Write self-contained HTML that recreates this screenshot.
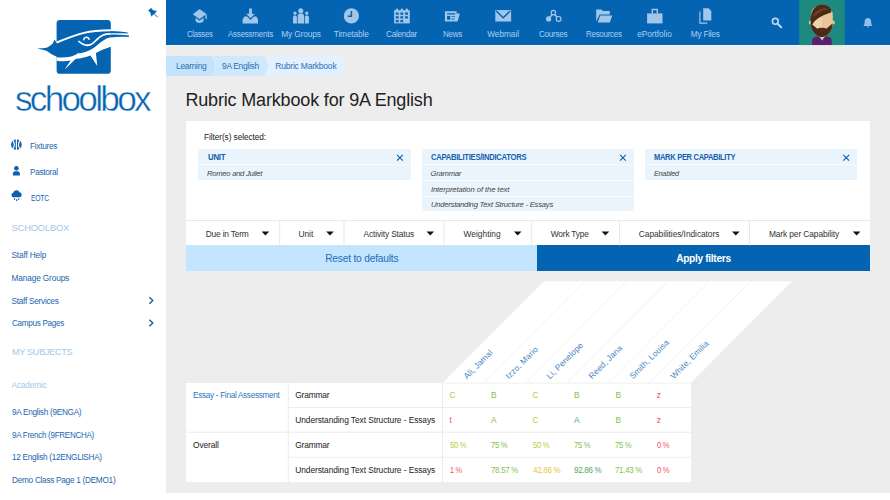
<!DOCTYPE html>
<html><head><meta charset="utf-8"><title>Rubric Markbook for 9A English</title>
<style>
*{box-sizing:border-box;margin:0;padding:0}
html,body{width:890px;height:500px;overflow:hidden;background:#ededed;font-family:"Liberation Sans",sans-serif}
.x{position:absolute;white-space:nowrap;line-height:1}
.a{position:absolute}
.rh{position:absolute;font-size:8.4px;color:#4a86c6;white-space:nowrap;transform-origin:0 100%;transform:rotate(-45deg);line-height:1}
</style></head><body>

<div class="a" style="left:0;top:0;width:166px;height:500px;background:#fff"></div>
<div class="a" style="left:166px;top:0;width:724px;height:45.1px;background:#0564b2"></div>
<div class="a" style="left:166px;top:45.1px;width:724px;height:1.4px;background:#f7f4f1"></div>
<div class="a" style="left:166px;top:493px;width:724px;height:7px;background:#fff"></div>
<!-- panel -->
<div class="a" style="left:186px;top:120.5px;width:684.3px;height:150.5px;background:#fff"></div>
<div class="a" style="left:198.4px;top:149.1px;width:212.4px;height:30.9px;background:#eaf4fd"></div>
<div class="a" style="left:421.8px;top:149.1px;width:212.5px;height:62.2px;background:#eaf4fd"></div>
<div class="a" style="left:644.9px;top:149.1px;width:212.4px;height:30.9px;background:#eaf4fd"></div>
<div class="a" style="left:198.4px;top:164.2px;width:212.4px;height:1px;background:#f8fbff"></div>
<div class="a" style="left:421.8px;top:164.2px;width:212.5px;height:1px;background:#f8fbff"></div>
<div class="a" style="left:421.8px;top:180px;width:212.5px;height:1px;background:#f8fbff"></div>
<div class="a" style="left:421.8px;top:195.7px;width:212.5px;height:1px;background:#f8fbff"></div>
<div class="a" style="left:644.9px;top:164.2px;width:212.4px;height:1px;background:#f8fbff"></div>
<div class="a" style="left:186px;top:220px;width:684.3px;height:1px;background:#e9e9e9"></div>
<div class="a" style="left:186px;top:245.3px;width:351px;height:25.7px;background:#c3e5fd"></div>
<div class="a" style="left:537px;top:245.3px;width:333.3px;height:25.7px;background:#0564b2"></div>
<!-- table -->
<div class="a" style="left:186.4px;top:382.9px;width:504.3px;height:99.3px;background:#fff"></div>

<svg class="a" style="left:0;top:0" width="890" height="500" viewBox="0 0 890 500">
<!-- logo -->
<rect x="56.6" y="20.1" width="54.2" height="53.7" rx="3.4" fill="#0564b2"/>
<path d="M56.6 57.2 C63 57.8 70 57.4 75 55 L78.4 53.6 C84 53 90 50.6 94 47.8 C98 44.8 101 41.5 105 39.4 C107 38.2 109 37.6 111.4 37.1 L111.4 46.6 C106 48.2 100 51 95.9 53.1 L97.3 66 L90.4 55.4 C86 57 80 58.4 75.4 59 L64.7 69.4 L70.6 60.6 C66 61.6 61 61.4 56.6 60.7 Z" fill="#fff"/>
<path d="M64.7 69.4 L77.9 53 L79.6 54 Z" fill="#fff"/>
<path d="M37.3 48.3 C41 48.4 44 48.2 46.4 47.8 C49 46.6 51 45 52.7 43.4 L54.6 39.6 L56.3 42.4 L57.4 42.2 L57.4 57 C55 56 53 55 51.2 54 C49.4 52.6 48 51.6 46.4 50.7 C43 49.8 40 49 37.3 48.3 Z" fill="#0564b2"/>
<path d="M110.2 31.1 C117 31.2 123 31.8 127.9 32.5 L127.5 33.6 C122 33.3 116 33.2 110.2 33.3 Z" fill="#0564b2"/>
<path d="M110.4 34.6 C117 34.7 123 35 129 35.4 L128.8 36.9 C122 36.6 116 36.7 110.4 37.4 Z" fill="#0564b2"/>
<path d="M56.6 42.5 C65 39 75 35 84 32.8 C92 31 102 30.4 110.8 30.2" fill="none" stroke="#fff" stroke-width="1.9"/>
<path d="M110.8 33.9 C107 34 105 34.3 103.6 34.8 C101 36 98.5 38 96.4 40 C94.5 42 92.5 44 90 44.8 C88.5 45.3 87.3 45.3 86 45.2" fill="none" stroke="#fff" stroke-width="1.8"/>
<path d="M86 45.2 C83.4 44.8 80.8 43.2 78.8 41.4" fill="none" stroke="#fff" stroke-width="1.5" stroke-linecap="round"/>
<path d="M83.7 40.4 A2.75 2.75 0 1 1 89.2 39.8" fill="none" stroke="#fff" stroke-width="1.5"/>
<!-- pin -->
<path d="M151.2 8.2 L152.7 10.2 L156.6 11.4 L154.2 13.6 L151.4 16.2 L150.5 12.4 L148.4 10.6 Z" fill="#0564b2" stroke="#0564b2" stroke-width="0.5" stroke-linejoin="round"/>
<path d="M153.6 13.2 L157.6 17.2" stroke="#0564b2" stroke-width="1" fill="none"/>
<!-- sidebar icons -->
<g fill="#0f5fad">
<circle cx="16.4" cy="144.6" r="5.3"/>
<g stroke="#fff" fill="none" stroke-width="1.15"><path d="M16.4 139 V150.2" stroke-width="1.2"/><path d="M12.6 139.8 Q16 144.6 12.6 149.4"/><path d="M20.2 139.8 Q16.8 144.6 20.2 149.4"/></g>
<circle cx="16.4" cy="168.3" r="2.3"/><path d="M12.9 175.6 V173.8 C12.9 171.8 14.4 171.2 16.4 171.2 C18.4 171.2 19.9 171.8 19.9 173.8 V175.6 Z"/>
<path d="M13.4 197.3 A2.3 2.3 0 0 1 13.2 192.8 A3.4 3.4 0 0 1 19.6 192.2 A2.6 2.6 0 0 1 19.6 197.3 Z"/>
<rect x="14" y="198.3" width="1.1" height="1.6"/><rect x="16.1" y="199.2" width="1.1" height="1.8"/><rect x="18.2" y="198.3" width="1.1" height="1.6"/>
</g>
<g fill="none" stroke="#0b5aa5" stroke-width="1.3"><path d="M149.4 297.2 L152.8 300.5 L149.4 303.8"/><path d="M149.4 319.7 L152.8 323 L149.4 326.3"/></g>
<!-- nav icons -->
<g fill="#a0c6ea">
<path d="M195.6 17 L199.5 20 L203.6 17 V20.6 C203.6 22.1 201.6 23.1 199.5 23.1 C197.4 23.1 195.6 22.1 195.6 20.6 Z"/>
<path d="M199.5 8.2 L207.6 13.9 L199.5 20 L191.8 14.3 Z" stroke="#0564b2" stroke-width="1.3"/>
<rect x="205.4" y="14.6" width="1.4" height="4.4"/>
<path d="M244.4 16.4 H256.4 L258 19.6 V23.4 H242.6 V19.6 Z"/>
<path d="M248.5 8 H252.5 V13.2 H256.2 L250.5 19.2 L244.8 13.2 H248.5 Z" stroke="#0564b2" stroke-width="1.2"/>
<circle cx="300.8" cy="10.8" r="2.5"/><path d="M297.7 23.4 V16 C297.7 14.2 299 13.6 300.8 13.6 C302.6 13.6 304 14.2 304 16 V23.4Z"/>
<circle cx="295" cy="13.2" r="1.6"/><path d="M293 23.4 V17.4 C293 16.2 293.9 15.6 295 15.6 C296.1 15.6 296.9 16.2 296.9 17.4 V23.4Z"/>
<circle cx="306.8" cy="13.2" r="1.6"/><path d="M304.8 23.4 V17.4 C304.8 16.2 305.7 15.6 306.8 15.6 C307.9 15.6 308.9 16.2 308.9 17.4 V23.4Z"/>
<circle cx="351.4" cy="15.9" r="7.6"/>
<path d="M394.1 10.2 H409.8 V23.4 H394.1 Z"/>
<rect x="395.8" y="8.6" width="2.4" height="2.4" rx="1.2"/><rect x="400.7" y="8.6" width="2.4" height="2.4" rx="1.2"/><rect x="405.6" y="8.6" width="2.4" height="2.4" rx="1.2"/>
<path d="M444.9 11.2 H456.6 V13.6 H459.8 L457.6 21.5 H444.9 Z"/>
<rect x="495.3" y="10.1" width="15.8" height="11.4"/>
<path d="M596.2 9.6 H601.6 L602.6 11 H609.8 V14.6 H599.6 L596.2 21.4 Z"/>
<path d="M600.2 15.4 H612.3 L609.8 22.5 H597.8 Z"/>
<rect x="647.1" y="13.4" width="15.4" height="10"/>
<path d="M703.2 8.3 H708.6 L711.3 11 V20.6 H703.2 Z"/>
</g>
<g stroke="#0564b2" fill="none">
<path d="M351.4 11 V16.2 H347.8" stroke-width="1.5"/>
<path d="M395.8 12.4 h2.8 v2.3 h-2.8z M400.4 12.4 h2.8 v2.3 h-2.8z M405.1 12.4 h2.8 v2.3 h-2.8z M395.8 16.2 h2.8 v2.3 h-2.8z M400.4 16.2 h2.8 v2.3 h-2.8z M405.1 16.2 h2.8 v2.3 h-2.8z M395.8 20 h2.8 v2.3 h-2.8z M400.4 20 h2.8 v2.3 h-2.8z" fill="#0564b2" stroke="none"/>
<path d="M447.1 13.2 H455.2 V14.4 H447.1Z M447.1 16.1 H450.3 V19.7 H447.1Z M451.6 16.2 H455 V17.1 H451.6Z M451.6 18.6 H454.4 V19.5 H451.6Z" fill="#0564b2" stroke="none"/>
<path d="M496.3 11 L503.2 17.8 L510.1 11" stroke-width="1.5"/>
</g>
<g stroke="#a0c6ea" fill="none" stroke-width="1.2">
<path d="M553.4 13 L548.7 18.8 M553.4 13 L558.4 18.8" stroke-width="1.6"/>
<circle cx="553.4" cy="12.6" r="2.2" fill="#0564b2"/><circle cx="558.6" cy="18.9" r="2.4" fill="#0564b2"/>
<circle cx="548.6" cy="18.9" r="2.6" fill="#a0c6ea" stroke="none"/>
<path d="M652.3 13.4 V9.6 H657.3 V13.4" stroke-width="1.5"/>
<path d="M699.9 11.6 V23.2 H707.4" stroke-width="1.2"/>
</g>
<!-- search -->
<g stroke="#bcd8f2" fill="none"><circle cx="775.3" cy="21.3" r="2.9" stroke-width="1.6"/><path d="M777.6 23.7 L781.2 27.2" stroke-width="2" stroke-linecap="round"/></g>
<!-- avatar -->
<rect x="799.2" y="0" width="45.7" height="45.1" fill="#1e897e"/>
<path d="M812.2 45.1 V40.4 C812.2 37.8 815 36.6 818.4 36.2 L822 40.6 L825.8 36.2 C829 36.6 831.7 37.8 831.7 40.4 V45.1 Z" fill="#5b1f6e"/>
<path d="M818.6 35 H825.6 L822.1 40.6 Z" fill="#eccaa2"/>
<ellipse cx="810.3" cy="22.6" rx="1.4" ry="2" fill="#eccaa2"/><ellipse cx="833.4" cy="22.6" rx="1.4" ry="2" fill="#e6c197"/>
<path d="M811 16 C811 8 816 5.2 821.8 5.2 C827.6 5.2 832.5 8 832.5 16 V25 C832.5 29 829 33.5 826 35.5 C824.5 36.4 823 36.6 821.8 36.6 C820.6 36.6 819 36.4 817.6 35.5 C814.5 33.5 811 29 811 25 Z" fill="#f0d2ab"/>
<path d="M821.8 12 H832.5 V25 C832.5 29 829 33.5 826 35.5 C824.5 36.4 823 36.6 821.8 36.6 Z" fill="#e8c59c"/>
<path d="M811 23.6 L817.4 28.8 C819 27.6 820.6 27.4 821.8 28 C823 27.4 824.6 27.6 826.2 28.8 L832.5 23.6 V25.5 C832.5 29.5 829 33.8 826 35.8 C824.5 36.7 823 37 821.8 37 C820.6 37 819 36.7 817.6 35.8 C814.6 33.8 811 29.5 811 25.5 Z" fill="#4d2a15"/>
<ellipse cx="821.8" cy="30.6" rx="1.2" ry="0.45" fill="#7a4c2c"/>
<path d="M810.7 24.8 C809.9 12 813.8 4.7 822 4.7 C828 4.8 831.8 8 831.4 12.2 C825 14.6 816 17.6 812.4 24.4 Z" fill="#4d2a15"/>
<path d="M813.4 14.6 C817 9 824 7 829.6 8.8 C824 9.6 818 12.4 814 17.6 Z" fill="#6b4022"/>
<!-- bell -->
<path d="M867.9 17.9 C870.3 17.9 871.2 19.8 871.2 22 C871.2 24 871.6 25 872.4 25.9 H863.4 C864.2 25 864.6 24 864.6 22 C864.6 19.8 865.5 17.9 867.9 17.9 Z M866.9 26.5 H868.9 C868.9 28.1 866.9 28.1 866.9 26.5Z" fill="#8fbfea"/>
<!-- breadcrumbs -->
<path d="M264.6 56 L268.2 66 L264.6 76 H343.2 L347 66 L343.2 56 Z" fill="#e2f1fd"/>
<path d="M212.5 56 L216.2 66 L212.5 76 H264.6 L268.2 66 L264.6 56 Z" fill="#cfe8fc"/>
<path d="M166 56 H212.5 L216.2 66 L212.5 76 H166 Z" fill="#c4e4fc"/>
<path d="M212.5 56 L216.2 66 L212.5 76" fill="none" stroke="#e1f0fc" stroke-width="0.8"/>
<!-- chip x -->
<g stroke="#0b5fae" stroke-width="1.1" fill="none">
<path d="M397 154.8 L402.8 160.6 M402.8 154.8 L397 160.6"/>
<path d="M620 154.8 L625.8 160.6 M625.8 154.8 L620 160.6"/>
<path d="M843.3 154.8 L849.1 160.6 M849.1 154.8 L843.3 160.6"/>
</g>
<!-- dropdown dividers & arrows -->
<g fill="#e9e9e9"><rect x="279.2" y="220" width="1" height="25.3"/><rect x="343.5" y="220" width="1" height="25.3"/><rect x="443.5" y="220" width="1" height="25.3"/><rect x="531.2" y="220" width="1" height="25.3"/><rect x="619" y="220" width="1" height="25.3"/><rect x="749" y="220" width="1" height="25.3"/></g>
<g fill="#111">
<path d="M261.6 231.6 h7.6 l-3.8 3.8z"/><path d="M326.2 231.6 h7.6 l-3.8 3.8z"/><path d="M426.5 231.6 h7.6 l-3.8 3.8z"/><path d="M513.9 231.6 h7.6 l-3.8 3.8z"/><path d="M601.6 231.6 h7.6 l-3.8 3.8z"/><path d="M732 231.6 h7.6 l-3.8 3.8z"/><path d="M852.8 231.6 h7.6 l-3.8 3.8z"/>
</g>
<!-- header parallelogram -->
<polygon points="442.5,382.9 543.7,281.3 791.9,281.3 690.7,382.9" fill="#fff"/>
<g stroke="#f3f3f3" stroke-width="1">
<line x1="483.9" y1="382.9" x2="585.1" y2="281.3"/><line x1="525.3" y1="382.9" x2="626.5" y2="281.3"/><line x1="566.7" y1="382.9" x2="667.9" y2="281.3"/><line x1="608.1" y1="382.9" x2="709.3" y2="281.3"/><line x1="649.5" y1="382.9" x2="750.7" y2="281.3"/>
</g>
<!-- table lines -->
<g fill="#ebebeb">
<rect x="442.5" y="382.6" width="248.2" height="1" fill="#efefef"/><rect x="288.2" y="407" width="402.5" height="1"/><rect x="186.4" y="431.7" width="504.3" height="1"/><rect x="288.2" y="456.7" width="402.5" height="1"/>
<rect x="287.8" y="382.9" width="1" height="99.3"/><rect x="442" y="382.9" width="1" height="99.3"/>
</g>
</svg>
<div class="rh" style="left:468.20px;top:371.7px;letter-spacing:0.08px">Ali, Jamal</div>
<div class="rh" style="left:509.65px;top:371.7px;letter-spacing:0.08px">Izzo, Mario</div>
<div class="rh" style="left:551.10px;top:371.7px;letter-spacing:0.08px">Li, Penelope</div>
<div class="rh" style="left:592.55px;top:371.7px;letter-spacing:0.08px">Reed, Jana</div>
<div class="rh" style="left:634.00px;top:371.7px;letter-spacing:0.08px">Smith, Louisa</div>
<div class="rh" style="left:675.45px;top:371.7px;letter-spacing:0.08px">White, Emilia</div>
<div class="x" style="left:14.90px;top:81.00px;font-size:35.3px;color:#0564b2;letter-spacing:-2.774px;-webkit-text-stroke:0.45px #fff;">schoolbox</div>
<div class="x" style="left:30.40px;top:142.00px;font-size:8.3px;color:#1b66b1;letter-spacing:-0.300px;transform:scaleX(0.9979);transform-origin:0 0;">Fixtures</div>
<div class="x" style="left:30.40px;top:168.00px;font-size:8.3px;color:#1b66b1;letter-spacing:-0.300px;transform:scaleX(0.9932);transform-origin:0 0;">Pastoral</div>
<div class="x" style="left:31.10px;top:194.00px;font-size:8.3px;color:#1b66b1;letter-spacing:-0.300px;transform:scaleX(0.8169);transform-origin:0 0;">EOTC</div>
<div class="x" style="left:11.50px;top:224.00px;font-size:9.3px;color:#a3c8e8;letter-spacing:-0.137px;">SCHOOLBOX</div>
<div class="x" style="left:11.50px;top:251.00px;font-size:8.3px;color:#1b66b1;letter-spacing:-0.163px;">Staff Help</div>
<div class="x" style="left:11.50px;top:274.00px;font-size:8.3px;color:#1b66b1;letter-spacing:-0.146px;">Manage Groups</div>
<div class="x" style="left:11.50px;top:297.00px;font-size:8.3px;color:#1b66b1;letter-spacing:-0.283px;">Staff Services</div>
<div class="x" style="left:11.50px;top:319.00px;font-size:8.3px;color:#1b66b1;letter-spacing:-0.300px;transform:scaleX(0.9798);transform-origin:0 0;">Campus Pages</div>
<div class="x" style="left:11.50px;top:348.00px;font-size:9.3px;color:#a3c8e8;letter-spacing:-0.336px;transform:scaleX(0.9833);transform-origin:0 0;">MY SUBJECTS</div>
<div class="x" style="left:11.50px;top:381.00px;font-size:8.3px;color:#a3c8e8;letter-spacing:-0.154px;">Academic</div>
<div class="x" style="left:11.50px;top:408.00px;font-size:8.3px;color:#1b66b1;letter-spacing:-0.300px;transform:scaleX(0.9935);transform-origin:0 0;">9A English (9ENGA)</div>
<div class="x" style="left:11.50px;top:431.00px;font-size:8.3px;color:#1b66b1;letter-spacing:-0.300px;transform:scaleX(0.9712);transform-origin:0 0;">9A French (9FRENCHA)</div>
<div class="x" style="left:11.50px;top:453.00px;font-size:8.3px;color:#1b66b1;letter-spacing:-0.300px;transform:scaleX(0.9880);transform-origin:0 0;">12 English (12ENGLISHA)</div>
<div class="x" style="left:11.50px;top:476.00px;font-size:8.3px;color:#1b66b1;letter-spacing:-0.300px;transform:scaleX(0.9975);transform-origin:0 0;">Demo Class Page 1 (DEMO1)</div>
<div class="x" style="left:186.80px;top:30.00px;font-size:8.3px;color:#a9cef0;letter-spacing:-0.300px;transform:scaleX(0.9325);transform-origin:0 0;">Classes</div>
<div class="x" style="left:227.70px;top:30.00px;font-size:8.3px;color:#a9cef0;letter-spacing:-0.300px;transform:scaleX(0.9765);transform-origin:0 0;">Assessments</div>
<div class="x" style="left:281.30px;top:30.00px;font-size:8.3px;color:#a9cef0;letter-spacing:-0.128px;">My Groups</div>
<div class="x" style="left:333.80px;top:30.00px;font-size:8.3px;color:#a9cef0;letter-spacing:-0.138px;">Timetable</div>
<div class="x" style="left:386.10px;top:30.00px;font-size:8.3px;color:#a9cef0;letter-spacing:-0.300px;transform:scaleX(0.9935);transform-origin:0 0;">Calendar</div>
<div class="x" style="left:443.00px;top:30.00px;font-size:8.3px;color:#a9cef0;letter-spacing:-0.300px;transform:scaleX(0.9747);transform-origin:0 0;">News</div>
<div class="x" style="left:487.20px;top:30.00px;font-size:8.3px;color:#a9cef0;letter-spacing:-0.046px;">Webmail</div>
<div class="x" style="left:539.40px;top:30.00px;font-size:8.3px;color:#a9cef0;letter-spacing:-0.300px;transform:scaleX(0.9777);transform-origin:0 0;">Courses</div>
<div class="x" style="left:586.30px;top:30.00px;font-size:8.3px;color:#a9cef0;letter-spacing:-0.300px;transform:scaleX(0.9647);transform-origin:0 0;">Resources</div>
<div class="x" style="left:637.20px;top:30.00px;font-size:8.3px;color:#a9cef0;letter-spacing:-0.049px;">ePortfolio</div>
<div class="x" style="left:690.80px;top:30.00px;font-size:8.3px;color:#a9cef0;letter-spacing:-0.262px;">My Files</div>
<div class="x" style="left:176.00px;top:62.00px;font-size:8.5px;color:#2a6fb5;letter-spacing:-0.307px;transform:scaleX(0.9934);transform-origin:0 0;">Learning</div>
<div class="x" style="left:222.10px;top:62.00px;font-size:8.5px;color:#2a6fb5;letter-spacing:-0.307px;transform:scaleX(0.9910);transform-origin:0 0;">9A English</div>
<div class="x" style="left:275.30px;top:62.00px;font-size:8.5px;color:#2a6fb5;letter-spacing:-0.207px;">Rubric Markbook</div>
<div class="x" style="left:185.40px;top:91.00px;font-size:18px;color:#222;letter-spacing:-0.165px;">Rubric Markbook for 9A English</div>
<div class="x" style="left:204.00px;top:133.00px;font-size:8.3px;color:#222;letter-spacing:-0.084px;">Filter(s) selected:</div>
<div class="x" style="left:207.70px;top:154.00px;font-size:8.25px;color:#1260ae;letter-spacing:-0.298px;transform:scaleX(0.9501);transform-origin:0 0;font-weight:bold;">UNIT</div>
<div class="x" style="left:207.40px;top:170.00px;font-size:7.7px;color:#444;letter-spacing:-0.278px;transform:scaleX(0.9962);transform-origin:0 0;font-style:italic;">Romeo and Juliet</div>
<div class="x" style="left:430.90px;top:154.00px;font-size:8.25px;color:#1260ae;letter-spacing:-0.298px;transform:scaleX(0.9277);transform-origin:0 0;font-weight:bold;">CAPABILITIES/INDICATORS</div>
<div class="x" style="left:430.50px;top:170.00px;font-size:7.7px;color:#444;letter-spacing:-0.266px;font-style:italic;">Grammar</div>
<div class="x" style="left:430.90px;top:186.00px;font-size:7.7px;color:#444;letter-spacing:-0.106px;font-style:italic;">Interpretation of the text</div>
<div class="x" style="left:430.90px;top:201.00px;font-size:7.7px;color:#444;letter-spacing:-0.249px;font-style:italic;">Understanding Text Structure - Essays</div>
<div class="x" style="left:654.00px;top:154.00px;font-size:8.25px;color:#1260ae;letter-spacing:-0.298px;transform:scaleX(0.9069);transform-origin:0 0;font-weight:bold;">MARK PER CAPABILITY</div>
<div class="x" style="left:654.00px;top:170.00px;font-size:7.7px;color:#444;letter-spacing:-0.278px;transform:scaleX(0.9462);transform-origin:0 0;font-style:italic;">Enabled</div>
<div class="x" style="left:205.70px;top:230.00px;font-size:8.4px;color:#333;letter-spacing:-0.187px;">Due in Term</div>
<div class="x" style="left:298.40px;top:230.00px;font-size:8.4px;color:#333;letter-spacing:0.011px;">Unit</div>
<div class="x" style="left:363.60px;top:230.00px;font-size:8.4px;color:#333;letter-spacing:-0.143px;">Activity Status</div>
<div class="x" style="left:463.60px;top:230.00px;font-size:8.4px;color:#333;">Weighting</div>
<div class="x" style="left:550.80px;top:230.00px;font-size:8.4px;color:#333;letter-spacing:-0.202px;">Work Type</div>
<div class="x" style="left:638.80px;top:230.00px;font-size:8.4px;color:#333;letter-spacing:-0.061px;">Capabilities/Indicators</div>
<div class="x" style="left:768.90px;top:230.00px;font-size:8.4px;color:#333;letter-spacing:-0.103px;">Mark per Capability</div>
<div class="x" style="left:325.20px;top:254.00px;font-size:10.2px;color:#1f6cb8;letter-spacing:-0.191px;">Reset to defaults</div>
<div class="x" style="left:676.20px;top:254.00px;font-size:10.2px;color:#fff;letter-spacing:-0.334px;font-weight:bold;">Apply filters</div>
<div class="x" style="left:193.00px;top:391.00px;font-size:8.4px;color:#2e78c0;letter-spacing:-0.304px;transform:scaleX(0.9763);transform-origin:0 0;">Essay - Final Assessment</div>
<div class="x" style="left:193.00px;top:441.00px;font-size:8.4px;color:#222;letter-spacing:-0.111px;">Overall</div>
<div class="x" style="left:295.30px;top:391.00px;font-size:8.4px;color:#222;letter-spacing:-0.195px;">Grammar</div>
<div class="x" style="left:295.30px;top:416.00px;font-size:8.4px;color:#222;letter-spacing:-0.078px;">Understanding Text Structure - Essays</div>
<div class="x" style="left:295.30px;top:441.00px;font-size:8.4px;color:#222;letter-spacing:-0.195px;">Grammar</div>
<div class="x" style="left:295.30px;top:466.00px;font-size:8.4px;color:#222;letter-spacing:-0.078px;">Understanding Text Structure - Essays</div>
<div class="x" style="left:449.60px;top:391.00px;font-size:8.4px;color:#b9cd3c;">C</div>
<div class="x" style="left:491.05px;top:391.00px;font-size:8.4px;color:#86c14c;">B</div>
<div class="x" style="left:532.50px;top:391.00px;font-size:8.4px;color:#b9cd3c;">C</div>
<div class="x" style="left:573.95px;top:391.00px;font-size:8.4px;color:#86c14c;">B</div>
<div class="x" style="left:615.40px;top:391.00px;font-size:8.4px;color:#86c14c;">B</div>
<div class="x" style="left:656.85px;top:391.00px;font-size:8.4px;color:#f2545b;">z</div>
<div class="x" style="left:449.60px;top:416.00px;font-size:8.4px;color:#f2545b;">t</div>
<div class="x" style="left:491.05px;top:416.00px;font-size:8.4px;color:#86c14c;">A</div>
<div class="x" style="left:532.50px;top:416.00px;font-size:8.4px;color:#b9cd3c;">C</div>
<div class="x" style="left:573.95px;top:416.00px;font-size:8.4px;color:#57a860;">A</div>
<div class="x" style="left:615.40px;top:416.00px;font-size:8.4px;color:#86c14c;">B</div>
<div class="x" style="left:656.85px;top:416.00px;font-size:8.4px;color:#f2545b;">z</div>
<div class="x" style="left:449.60px;top:441.00px;font-size:8.4px;color:#b9cd3c;letter-spacing:-0.304px;transform:scaleX(0.9182);transform-origin:0 0;">50 %</div>
<div class="x" style="left:491.05px;top:441.00px;font-size:8.4px;color:#86c14c;letter-spacing:-0.304px;transform:scaleX(0.9182);transform-origin:0 0;">75 %</div>
<div class="x" style="left:532.50px;top:441.00px;font-size:8.4px;color:#b9cd3c;letter-spacing:-0.304px;transform:scaleX(0.9182);transform-origin:0 0;">50 %</div>
<div class="x" style="left:573.95px;top:441.00px;font-size:8.4px;color:#86c14c;letter-spacing:-0.304px;transform:scaleX(0.9182);transform-origin:0 0;">75 %</div>
<div class="x" style="left:615.40px;top:441.00px;font-size:8.4px;color:#86c14c;letter-spacing:-0.304px;transform:scaleX(0.9182);transform-origin:0 0;">75 %</div>
<div class="x" style="left:656.85px;top:441.00px;font-size:8.4px;color:#f2545b;letter-spacing:-0.304px;transform:scaleX(0.9112);transform-origin:0 0;">0 %</div>
<div class="x" style="left:449.60px;top:466.00px;font-size:8.4px;color:#f2545b;letter-spacing:-0.304px;transform:scaleX(0.8764);transform-origin:0 0;">1 %</div>
<div class="x" style="left:491.05px;top:466.00px;font-size:8.4px;color:#86c14c;letter-spacing:-0.304px;transform:scaleX(0.9436);transform-origin:0 0;">78.57 %</div>
<div class="x" style="left:532.50px;top:466.00px;font-size:8.4px;color:#e6c63c;letter-spacing:-0.304px;transform:scaleX(0.9605);transform-origin:0 0;">42.86 %</div>
<div class="x" style="left:573.95px;top:466.00px;font-size:8.4px;color:#57a860;letter-spacing:-0.304px;transform:scaleX(0.9605);transform-origin:0 0;">92.86 %</div>
<div class="x" style="left:615.40px;top:466.00px;font-size:8.4px;color:#86c14c;letter-spacing:-0.304px;transform:scaleX(0.9436);transform-origin:0 0;">71.43 %</div>
<div class="x" style="left:656.85px;top:466.00px;font-size:8.4px;color:#f2545b;letter-spacing:-0.304px;transform:scaleX(0.9112);transform-origin:0 0;">0 %</div>
</body></html>
